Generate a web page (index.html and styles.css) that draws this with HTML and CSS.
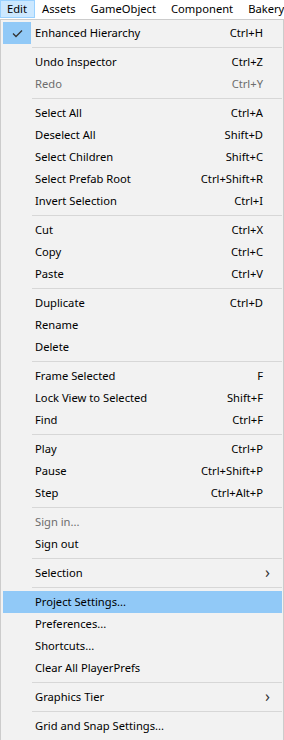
FILE: index.html
```html
<!DOCTYPE html>
<html lang="en">
  <head>
    <meta charset="UTF-8" />
    <title>Edit menu</title>
    <link rel="stylesheet" href="styles.css">
  </head>
  <body>
    <div class="menubar">
      <div class="menubar-item open">Edit</div>
      <div class="menubar-item">Assets</div>
      <div class="menubar-item">GameObject</div>
      <div class="menubar-item">Component</div>
      <div class="menubar-item">Bakery</div>
    </div>

    <div class="menu">
      <div class="item checked">
        <span class="check">
          <svg width="11" height="9" viewBox="0 0 11 9"><path d="M1 4.5 L4 7.5 L10 1.5" fill="none" stroke="#333" stroke-width="1.3"/></svg>
        </span>
        <span class="label">Enhanced Hierarchy</span><span class="key">Ctrl+H</span>
      </div>
      <div class="sep"></div>
      <div class="item"><span class="check"></span><span class="label">Undo Inspector</span><span class="key">Ctrl+Z</span></div>
      <div class="item disabled"><span class="check"></span><span class="label">Redo</span><span class="key">Ctrl+Y</span></div>
      <div class="sep"></div>
      <div class="item"><span class="check"></span><span class="label">Select All</span><span class="key">Ctrl+A</span></div>
      <div class="item"><span class="check"></span><span class="label">Deselect All</span><span class="key">Shift+D</span></div>
      <div class="item"><span class="check"></span><span class="label">Select Children</span><span class="key">Shift+C</span></div>
      <div class="item"><span class="check"></span><span class="label">Select Prefab Root</span><span class="key">Ctrl+Shift+R</span></div>
      <div class="item"><span class="check"></span><span class="label">Invert Selection</span><span class="key">Ctrl+I</span></div>
      <div class="sep"></div>
      <div class="item"><span class="check"></span><span class="label">Cut</span><span class="key">Ctrl+X</span></div>
      <div class="item"><span class="check"></span><span class="label">Copy</span><span class="key">Ctrl+C</span></div>
      <div class="item"><span class="check"></span><span class="label">Paste</span><span class="key">Ctrl+V</span></div>
      <div class="sep"></div>
      <div class="item"><span class="check"></span><span class="label">Duplicate</span><span class="key">Ctrl+D</span></div>
      <div class="item"><span class="check"></span><span class="label">Rename</span></div>
      <div class="item"><span class="check"></span><span class="label">Delete</span></div>
      <div class="sep"></div>
      <div class="item"><span class="check"></span><span class="label">Frame Selected</span><span class="key">F</span></div>
      <div class="item"><span class="check"></span><span class="label">Lock View to Selected</span><span class="key">Shift+F</span></div>
      <div class="item"><span class="check"></span><span class="label">Find</span><span class="key">Ctrl+F</span></div>
      <div class="sep"></div>
      <div class="item"><span class="check"></span><span class="label">Play</span><span class="key">Ctrl+P</span></div>
      <div class="item"><span class="check"></span><span class="label">Pause</span><span class="key">Ctrl+Shift+P</span></div>
      <div class="item"><span class="check"></span><span class="label">Step</span><span class="key">Ctrl+Alt+P</span></div>
      <div class="sep"></div>
      <div class="item disabled"><span class="check"></span><span class="label">Sign in...</span></div>
      <div class="item"><span class="check"></span><span class="label">Sign out</span></div>
      <div class="sep"></div>
      <div class="item"><span class="check"></span><span class="label">Selection</span><span class="arrow">&rsaquo;</span></div>
      <div class="sep"></div>
      <div class="item active"><span class="check"></span><span class="label">Project Settings...</span></div>
      <div class="item"><span class="check"></span><span class="label">Preferences...</span></div>
      <div class="item"><span class="check"></span><span class="label">Shortcuts...</span></div>
      <div class="item"><span class="check"></span><span class="label">Clear All PlayerPrefs</span></div>
      <div class="sep"></div>
      <div class="item"><span class="check"></span><span class="label">Graphics Tier</span><span class="arrow">&rsaquo;</span></div>
      <div class="sep"></div>
      <div class="item"><span class="check"></span><span class="label">Grid and Snap Settings...</span></div>
    </div>
  </body>
</html>
```

FILE: styles.css
```css
body {
  margin: 0;
  font-family: "Segoe UI", "Noto Sans", "Open Sans", sans-serif;
  font-size: 11.2px;
  color: #000;
  background: #fff;
  width: 284px;
  height: 740px;
  overflow: hidden;
}
.menubar {
  display: flex;
  height: 19px;
  background: #fff;
}
.menubar-item {
  padding: 0 7px 0 6px;
  line-height: 16px;
  border: 1px solid transparent;
  white-space: nowrap;
}
.menubar-item.open {
  background: #cce8ff;
  border-color: #99d1ff;
  padding-right: 7px;
  height: 16px;
}
.menu {
  background: #f2f2f2;
  border: 1px solid #cccccc;
  padding: 2px 1px 1px 2px;
  height: 721px;
}
.item {
  display: flex;
  align-items: center;
  height: 22px;
  padding-right: 19px;
  white-space: nowrap;
}
.item.disabled {
  color: #6d6d6d;
}
.item.active {
  background: #91c9f7;
}
.check {
  width: 28px;
  height: 22px;
  margin-right: 4px;
  display: flex;
  align-items: center;
  justify-content: center;
}
.item.checked .check {
  background: #91c9f7;
}
.label,
.key {
  margin-bottom: 2px;
}
.label {
  flex: 1;
}
.key {
  text-align: right;
}
.arrow {
  font-size: 16px;
  color: #333;
  margin-right: -7px;
  margin-bottom: 2px;
}
.sep {
  height: 1px;
  background: #d7d7d7;
  margin: 3px 0 3px 29px;
}
```
